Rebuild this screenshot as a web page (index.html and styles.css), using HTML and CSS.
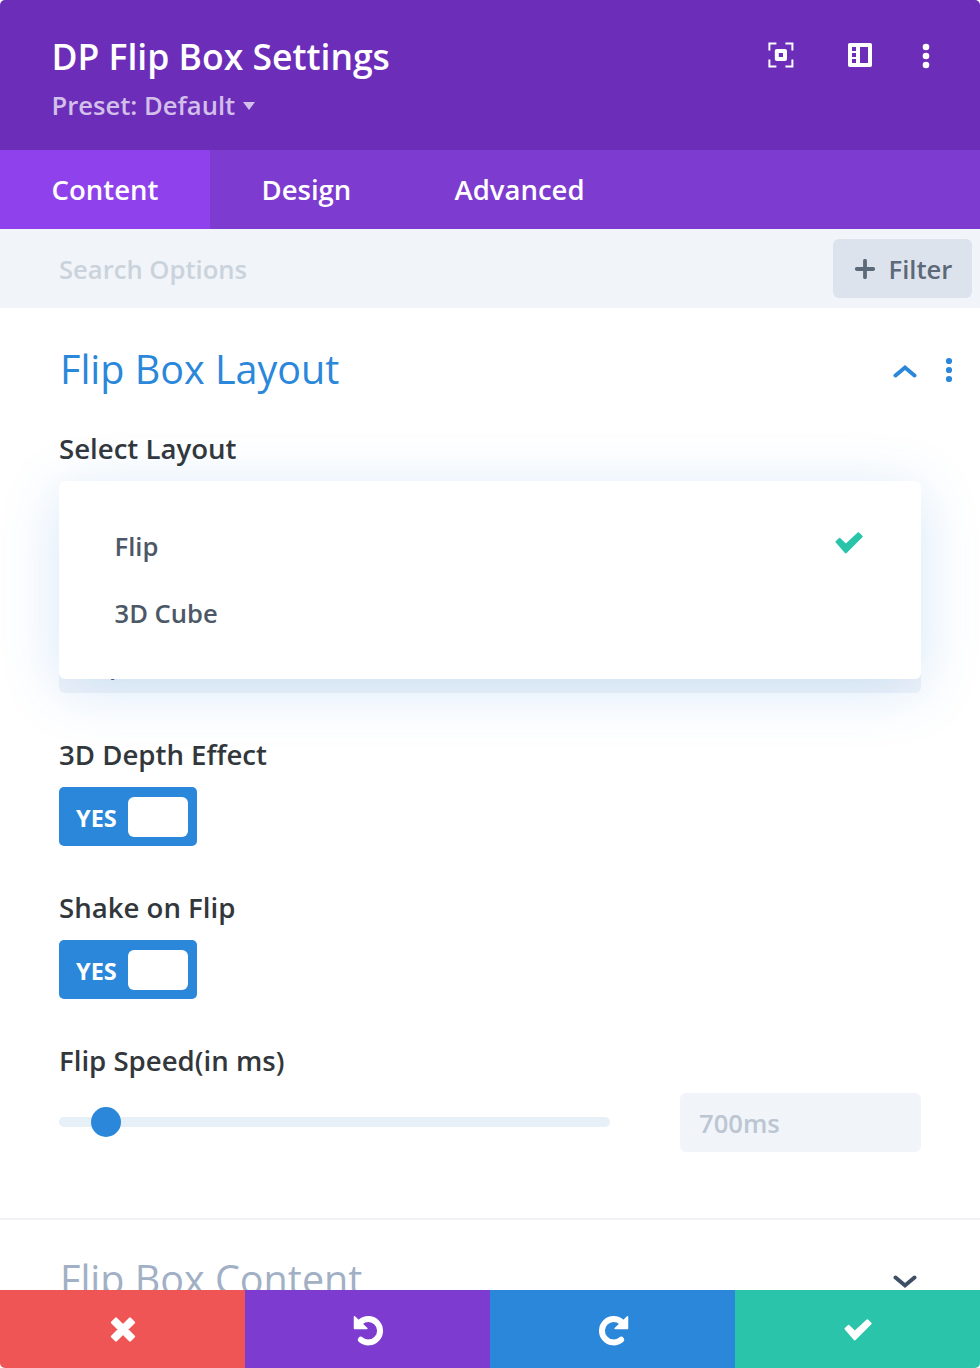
FILE: index.html
```html
<!DOCTYPE html>
<html lang="en">
<head>
<meta charset="UTF-8" />
<meta name="viewport" content="width=device-width, initial-scale=1" />
<title>DP Flip Box Settings</title>
<link rel="stylesheet" href="styles.css">
</head>
<body>

<div class="modal">
  <header class="modal-header">
    <div class="modal-heading">
      <h1>DP Flip Box Settings</h1>
      <div class="preset">Preset: Default <span class="caret"></span></div>
    </div>
    <div class="header-actions">
      <svg width="26" height="26" viewBox="0 0 26 26">
        <path d="M1.4 8.5v-7h7M17.4 1.5h7v7M24.4 17.5v7h-7M8.4 24.5h-7v-7" fill="none" stroke="#fff" stroke-width="2"/>
        <rect x="8.8" y="8.9" width="8.2" height="8.2" fill="none" stroke="#fff" stroke-width="4" stroke-linejoin="round"/>
      </svg>
      <svg width="26" height="26" viewBox="0 0 26 26">
        <path fill="#fff" fill-rule="evenodd" d="M2.7 1h20.6a1.7 1.7 0 0 1 1.7 1.7v20.6a1.7 1.7 0 0 1-1.7 1.7H2.7A1.7 1.7 0 0 1 1 23.3V2.7A1.7 1.7 0 0 1 2.7 1zM13 5v16h8V5zM5 5v4h4V5zM5 11v4h4v-4zM5 17v4h4v-4z"/>
      </svg>
      <svg class="dots" width="8" height="26" viewBox="0 0 8 26">
        <circle cx="4" cy="4" r="3.3"/><circle cx="4" cy="13" r="3.3"/><circle cx="4" cy="22" r="3.3"/>
      </svg>
    </div>
  </header>

  <nav class="tabs">
    <a class="tab active">Content</a>
    <a class="tab">Design</a>
    <a class="tab">Advanced</a>
  </nav>

  <div class="search-bar">
    <input type="text" class="search" placeholder="Search Options" />
    <button class="filter">
      <svg width="20" height="20" viewBox="0 0 20 20"><path d="M10 1.8v16.4M1.8 10h16.4" stroke="#5c6978" stroke-width="3.8" stroke-linecap="round"/></svg>
      <span>Filter</span>
    </button>
  </div>

  <section class="group open">
    <div class="group-head">
      <h2>Flip Box Layout</h2>
      <svg class="chevron" width="24" height="14" viewBox="0 0 24 14"><path d="M2.5 11.5L12 3.5l9.5 8"/></svg>
      <svg class="dots" width="8" height="26" viewBox="0 0 8 26">
        <circle cx="4" cy="4" r="3.1"/><circle cx="4" cy="13" r="3.1"/><circle cx="4" cy="22" r="3.1"/>
      </svg>
    </div>

    <div class="field">
      <label>Select Layout</label>
      <div class="select">
        <ul class="menu">
          <li>Flip
            <svg width="32" height="32" viewBox="0 0 32 32"><path class="check" d="M3.7 15.8l2.900-2.800 6.200 6.200L25.500 7.500l3 3L12.800 26.200z"/></svg>
          </li>
          <li>3D Cube</li>
        </ul>
      </div>
    </div>

    <div class="field">
      <label></label>
      <div class="select"><span>Top to Bottom</span></div>
    </div>

    <div class="field">
      <label>3D Depth Effect</label>
      <div class="toggle"><span>YES</span><i class="knob"></i></div>
    </div>

    <div class="field">
      <label>Shake on Flip</label>
      <div class="toggle"><span>YES</span><i class="knob"></i></div>
    </div>

    <div class="field">
      <label>Flip Speed(in ms)</label>
      <div class="range">
        <div class="track"><i class="handle"></i></div>
        <input type="text" class="range-value" placeholder="700ms" />
      </div>
    </div>
  </section>

  <section class="group">
    <div class="group-head">
      <h2>Flip Box Content</h2>
      <svg class="chevron" width="24" height="14" viewBox="0 0 24 14"><path d="M2.5 2.5L12 10.5l9.5-8"/></svg>
    </div>
  </section>

  <footer class="modal-footer">
    <button class="discard">
      <svg width="32" height="32" viewBox="0 0 32 32"><path class="cross" d="M9 5.500l7 7 7-7 4 4-7 7 7 7-4 4-7-7-7 7-4-4 7-7-7-7z"/></svg>
    </button>
    <button class="undo">
      <svg width="34" height="34" viewBox="-.5 -1 34 34"><path class="arc" d="M8.8 9.2A11.7 11.7 0 1 1 9.4 26.7"/><path class="arrow" d="M3 3.7v11.8h12.4z"/></svg>
    </button>
    <button class="redo">
      <svg width="34" height="34" viewBox="-.5 -1 34 34"><g transform="matrix(-1 0 0 1 34 0)"><path class="arc" d="M8.8 9.2A11.7 11.7 0 1 1 9.4 26.7"/><path class="arrow" d="M3 3.7v11.8h12.4z"/></g></svg>
    </button>
    <button class="save">
      <svg width="32" height="32" viewBox="0 0 32 32"><path class="check" d="M3.7 15.8l2.9-2.8 6.2 6.2L25.5 7.5l3 3L12.8 26.2z"/></svg>
    </button>
  </footer>
</div>

</body>
</html>
```
FILE: styles.css
```css
* {
  box-sizing: border-box;
}
body {
  margin: 0;
  background: #fff;
  font-family: "Open Sans", "Noto Sans", sans-serif;
  font-weight: 600;
}
h1, h2, ul {
  margin: 0;
  padding: 0;
}
svg {
  display: block;
  flex: none;
}
button, input {
  border: none;
  outline: none;
  font: inherit;
}
.modal {
  display: flex;
  flex-direction: column;
  height: 1368px;
  border-radius: 5px;
  overflow: hidden;
}
.modal-header {
  flex: none;
  display: flex;
  justify-content: space-between;
  height: 150px;
  padding: 32px 50.5px 0 51.5px;
  background: #6c2eb9;
  color: #fff;
}
h1 {
  font-size: 35.5px;
  line-height: 49px;
  font-weight: 600;
}
.preset {
  display: flex;
  align-items: center;
  font-size: 25.6px;
  line-height: 50px;
  color: #d3c0ea;
}
.caret {
  margin-left: 8px;
  border: 6px solid transparent;
  border-top: 8px solid #d3c0ea;
  border-bottom: 0;
}
.header-actions {
  display: flex;
  gap: 53px;
  padding-top: 10px;
}
.header-actions .dots {
  margin: 1px 0 0 -4px;
  fill: #fff;
}
.tabs {
  flex: none;
  display: flex;
  height: 79px;
  background: #7e3bd0;
}
.tab {
  padding: 0 51.6px;
  font-size: 27.5px;
  line-height: 80px;
  color: #fff;
}
.tab.active {
  background: #8f42ec;
}
.search-bar {
  flex: none;
  display: flex;
  align-items: center;
  justify-content: space-between;
  height: 79px;
  padding: 0 8px 0 59px;
  background: #f1f4f9;
  font-size: 25.6px;
}
.search {
  width: 500px;
  padding: 2px 0 0;
  background: none;
}
.search::placeholder {
  color: #cad3dc;
}
.filter {
  display: flex;
  align-items: center;
  gap: 14px;
  width: 139px;
  height: 59px;
  padding: 0 0 0 21.5px;
  border-radius: 6px;
  background: #dce3ec;
  color: #5c6978;
}
.filter span {
  padding-top: 2px;
}
.group {
  flex: none;
  height: 910px;
  padding: 0 59px;
}
.group + .group {
  border-top: 2px solid #eff1f4;
}
.group-head {
  display: flex;
  align-items: center;
  height: 121px;
  margin-right: -32px;
  padding-left: 1px;
  color: #a2b0c5;
}
.group + .group .group-head {
  height: 118px;
  padding-right: 36px;
}
.open .group-head {
  color: #2b87da;
}
h2 {
  flex: 1;
  font-size: 39.5px;
  font-weight: 400;
}
.chevron {
  margin: 5px 0 0;
  fill: none;
  stroke: #3f4f63;
  stroke-width: 4;
  stroke-linecap: round;
}
.open .chevron {
  margin-right: 28px;
  stroke: #2b87da;
}
.open .dots {
  margin-top: 3px;
  fill: #2b87da;
}
.field {
  height: 153px;
}
.field label {
  display: block;
  height: 52px;
  font-size: 27.6px;
  line-height: 39px;
  color: #32373c;
}
.select {
  position: relative;
  height: 59px;
  padding-left: 20px;
  border-radius: 6px;
  background: #f1f4f9;
  font-size: 25.6px;
  line-height: 62px;
  color: #4c5866;
}
/* open dropdown, covers the field below */
.menu {
  position: absolute;
  top: 0;
  left: 0;
  z-index: 2;
  width: 100%;
  height: 198px;
  padding: 32px 55.5px;
  border-radius: 6px;
  background: #fff;
  box-shadow: 0 10px 60px rgba(43, 135, 218, .2);
  list-style: none;
}
.menu li {
  display: flex;
  justify-content: space-between;
  height: 67px;
  line-height: 67px;
}
.menu svg {
  margin: 13px .5px 0 0;
}
.check, .cross {
  fill: #fff;
  stroke: #fff;
  stroke-width: 2.4;
  stroke-linejoin: round;
}
.menu .check {
  fill: #29c4a9;
  stroke: #29c4a9;
}
.toggle {
  display: flex;
  align-items: center;
  justify-content: space-between;
  width: 138px;
  height: 59px;
  padding: 0 9px 0 17px;
  border-radius: 5px;
  background: #2b87da;
  color: #fff;
  font-size: 23.5px;
  font-weight: 700;
}
.toggle span {
  padding-top: 2px;
}
.knob {
  width: 60px;
  height: 40px;
  border-radius: 6px;
  background: #fff;
}
.range {
  display: flex;
  align-items: center;
  justify-content: space-between;
}
.track {
  display: flex;
  align-items: center;
  width: 551px;
  height: 10px;
  margin-bottom: 2px;
  padding-left: 32px;
  border-radius: 5px;
  background: #e7eff7;
}
.handle {
  width: 30px;
  height: 30px;
  border-radius: 50%;
  background: #2b87da;
}
.range-value {
  width: 241px;
  height: 59px;
  padding: 1px 19px 0;
  border-radius: 6px;
  background: #f1f4f9;
  font-size: 25.6px;
}
.range-value::placeholder {
  color: #bcc6d3;
}
.modal-footer {
  position: fixed;
  left: 0;
  right: 0;
  bottom: 0;
  display: flex;
  height: 78px;
  border-radius: 0 0 5px 5px;
  overflow: hidden;
}
.modal-footer button {
  flex: 1;
  display: flex;
  align-items: center;
  justify-content: center;
  padding: 0;
}
.modal-footer svg {
  overflow: visible;
}
.discard {
  background: #ef5555;
}
.undo {
  background: #7e3bd0;
}
.redo {
  background: #2b87da;
}
.save {
  background: #29c4a9;
}
.arc {
  fill: none;
  stroke: #fff;
  stroke-width: 6;
  stroke-linecap: round;
}
.arrow {
  fill: #fff;
  stroke: #fff;
  stroke-width: 1.5;
  stroke-linejoin: round;
}
```
